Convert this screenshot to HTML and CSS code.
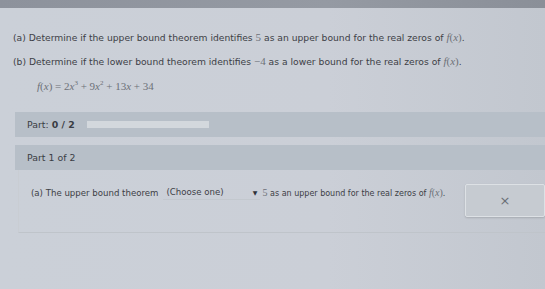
FILE: index.html
```html
<!DOCTYPE html>
<html>

<head>
    <meta name="viewport" content="width=device-width, initial-scale=1.0">
    <title>Bound theorem</title>
    <link rel="stylesheet" href="styles.css">
</head>

<body>
    <div class="topbar"></div>

    <div class="question">
        <p class="line">(a) Determine if the upper bound theorem identifies <span class="m">5</span> as an upper bound for the real zeros of <span class="m"><i>f</i>(<i>x</i>)</span>.</p>
        <p class="line">(b) Determine if the lower bound theorem identifies <span class="m">&minus;4</span> as a lower bound for the real zeros of <span class="m"><i>f</i>(<i>x</i>)</span>.</p>
        <p class="formula"><i>f</i>(<i>x</i>) = 2<i>x</i><sup>3</sup> + 9<i>x</i><sup>2</sup> + 13<i>x</i> + 34</p>
    </div>

    <div class="bar progress">
        <span>Part: <b>0 / 2</b></span>
        <div class="track"></div>
    </div>

    <div class="bar">
        <span>Part 1 of 2</span>
    </div>

    <div class="answer">
        <div class="answer-row">
            <span>(a) The upper bound theorem</span>
            <div class="select">
                <span>(Choose one)</span>
                <span class="caret">&#9660;</span>
            </div>
            <span class="tail"><span class="m">5</span> as an upper bound for the real zeros of <span class="m"><i>f</i>(<i>x</i>)</span>.</span>
        </div>
        <button class="clear">&times;</button>
    </div>
</body>

</html>
```

FILE: styles.css
```css
body {
    margin: 0;
    background: linear-gradient(90deg, #cbd0d8 0%, #cbcfd7 60%, #c2c7cf 100%);
    font-family: "DejaVu Sans", Verdana, sans-serif;
    color: #3d4046;
    height: 289px;
    overflow: hidden;
}

.topbar {
    height: 8px;
    background: linear-gradient(90deg, #8d929c 0%, #959aa3 60%, #8a8f98 100%);
}

.question {
    padding: 23px 0 0 13px;
    font-size: 9.2px;
}

.line {
    margin: 0 0 12px;
}

.m {
    font-family: "Liberation Serif", serif;
    font-size: 11px;
    color: #6d7178;
}

.formula {
    margin: 10px 0 0 24px;
    font-family: "Liberation Serif", serif;
    font-size: 11px;
    color: #6d7178;
}

.formula sup {
    font-size: 7px;
}

.bar {
    margin: 0 0 8px 15px;
    height: 25px;
    background: #b7bfc8;
    display: flex;
    align-items: center;
    padding-left: 12px;
    font-size: 9.4px;
    color: #3a3d44;
}

.progress {
    margin-top: 20px;
    gap: 12px;
}

.track {
    width: 122px;
    height: 7px;
    background: #d3d8dd;
}

.answer {
    margin: -8px 0 0 18px;
    height: 62px;
    border-bottom: 1px solid #bfc4ca;
    border-left: 1px solid #c9cdd3;
    display: flex;
    align-items: flex-start;
    font-size: 8.6px;
    color: #3d4046;
}

.answer-row {
    display: flex;
    align-items: center;
    padding: 16px 0 0 12px;
    width: 432px;
    white-space: nowrap;
}

.select {
    margin-left: 5px;
    width: 97px;
    height: 14px;
    display: flex;
    align-items: center;
    justify-content: space-between;
    border-bottom: 1px solid #c3c8ce;
    padding: 0 3px 0 3px;
    box-sizing: border-box;
    margin-right: 2px;
}

.tail {
    font-size: 8px;
}

.tail .m {
    font-size: 10px;
}

.caret {
    font-size: 6px;
    color: #2f3238;
}

.clear {
    margin: 14px 0 0 12px;
    width: 82px;
    height: 33px;
    background: #c6cbd1;
    border: 1px solid #dde1e5;
    border-radius: 2px;
    box-shadow: 0 1px 2px rgba(0, 0, 0, 0.15);
    color: #6a6f77;
    font-size: 13px;
    font-family: "DejaVu Sans", sans-serif;
    padding: 0;
}
```
